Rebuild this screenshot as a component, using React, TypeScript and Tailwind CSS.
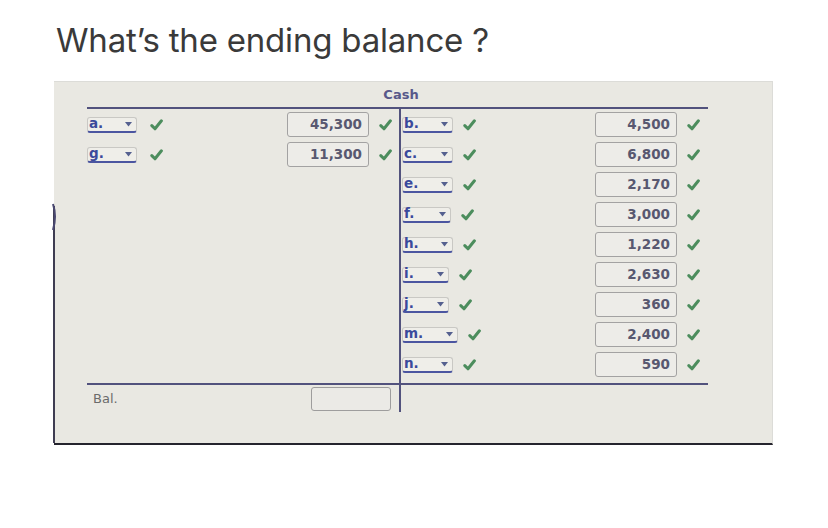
import React from "react";

const LINE = "border-[#52527d]";

function Check() {
  return (
    <svg width="13" height="12" viewBox="0 0 13 12" className="shrink-0">
      <path d="M1.8 6.6 L5 9.8 L11.4 1.8" fill="none" stroke="#4c8d5d" strokeWidth="3" strokeLinecap="round" strokeLinejoin="round" />
    </svg>
  );
}

function Drop({ label, w }: { label: string; w: string }) {
  return (
    <div className={`${w} h-[16px] flex items-center justify-between rounded-[3px] border border-[#c9c8c4] border-b-2 border-b-[#4b55a0] bg-[#efeee9] pl-[1px] pr-[4px]`}>
      <span className="text-[13.5px] leading-none font-bold text-[#3b4a9c]" style={{ fontFamily: '"DejaVu Sans", sans-serif' }}>{label}</span>
      <svg width="7" height="5" viewBox="0 0 7 5"><path d="M0 0 L7 0 L3.5 4.5 Z" fill="#55608f" /></svg>
    </div>
  );
}

function Num({ v }: { v: string }) {
  return (
    <div className="w-[82px] h-[25px] flex items-center justify-end rounded-[3px] border border-[#a3a2a2] bg-[#edece8] pr-[6px]">
      <span className="text-[13.5px] font-bold text-[#585870]" style={{ fontFamily: '"DejaVu Sans", sans-serif' }}>{v}</span>
    </div>
  );
}

const rightRows: { l: string; w: string; v: string }[] = [
  { l: "b.", w: "w-[51px]", v: "4,500" },
  { l: "c.", w: "w-[51px]", v: "6,800" },
  { l: "e.", w: "w-[51px]", v: "2,170" },
  { l: "f.", w: "w-[49px]", v: "3,000" },
  { l: "h.", w: "w-[51px]", v: "1,220" },
  { l: "i.", w: "w-[47px]", v: "2,630" },
  { l: "j.", w: "w-[47px]", v: "360" },
  { l: "m.", w: "w-[56px]", v: "2,400" },
  { l: "n.", w: "w-[51px]", v: "590" },
];

const leftRows = [
  { l: "a.", v: "45,300" },
  { l: "g.", v: "11,300" },
];

export default function App() {
  return (
    <div className="w-[828px] h-[528px] bg-white relative overflow-hidden">
      <div className="pl-[56px] pt-[20px] h-[81px]">
        <h1 className="text-[33px] leading-[40px] text-[#3a3a3a] tracking-[-0.2px]" style={{ fontFamily: 'Inter, "Noto Sans", sans-serif' }}>
          What’s the ending balance ?
        </h1>
      </div>
      <div className="relative ml-[54px] w-[719px] h-[364px] bg-[#e9e8e2] border-t border-r border-[#dcdcd8] border-b-2 border-b-[#25242e]">
        <div className="absolute left-[-1px] top-[124px] bottom-0 w-[2px] bg-[#3f3d52]" />
        <svg className="absolute left-[-2px] top-[121px]" width="6" height="28" viewBox="0 0 6 28">
          <path d="M1 1 Q5 13 1 27" fill="none" stroke="#4a4870" strokeWidth="2" />
        </svg>
        <div className="h-[25px] flex items-center ml-[33px] w-[628px] justify-center">
          <span className="text-[13px] font-bold text-[#58588a]" style={{ fontFamily: '"DejaVu Sans", sans-serif' }}>Cash</span>
        </div>
        <div className="ml-[33px] w-[621px]">
          <div className={`flex border-t-2 border-b-2 ${LINE}`}>
            <div className={`w-[314px] border-r-2 ${LINE} pt-[3px] pb-[5px] flex flex-col gap-[5px]`}>
              {leftRows.map((r) => (
                <div key={r.l} className="h-[25px] flex items-center justify-between pr-[7px]">
                  <div className="flex items-center gap-[13px]">
                    <Drop label={r.l} w="w-[50px]" />
                    <Check />
                  </div>
                  <div className="flex items-center gap-[10px]">
                    <Num v={r.v} />
                    <Check />
                  </div>
                </div>
              ))}
            </div>
            <div className="flex-1 pt-[3px] pb-[6px] flex flex-col gap-[5px]">
              {rightRows.map((r) => (
                <div key={r.l} className="h-[25px] flex items-center justify-between pl-[1px] pr-[8px]">
                  <div className="flex items-center gap-[10px]">
                    <Drop label={r.l} w={r.w} />
                    <Check />
                  </div>
                  <div className="flex items-center gap-[10px]">
                    <Num v={r.v} />
                    <Check />
                  </div>
                </div>
              ))}
            </div>
          </div>
          <div className="flex">
            <div className={`w-[314px] border-r-2 ${LINE} h-[27px] flex items-end justify-between pl-[6px] pr-[8px] pb-[1px]`}>
              <span className="text-[13px] text-[#6b6b6b] leading-[24px]" style={{ fontFamily: '"DejaVu Sans", sans-serif' }}>Bal.</span>
              <div className="w-[80px] h-[24px] rounded-[3px] border border-[#9e9d9d] bg-[#ebeae6]" />
            </div>
          </div>
        </div>
      </div>
    </div>
  );
}
